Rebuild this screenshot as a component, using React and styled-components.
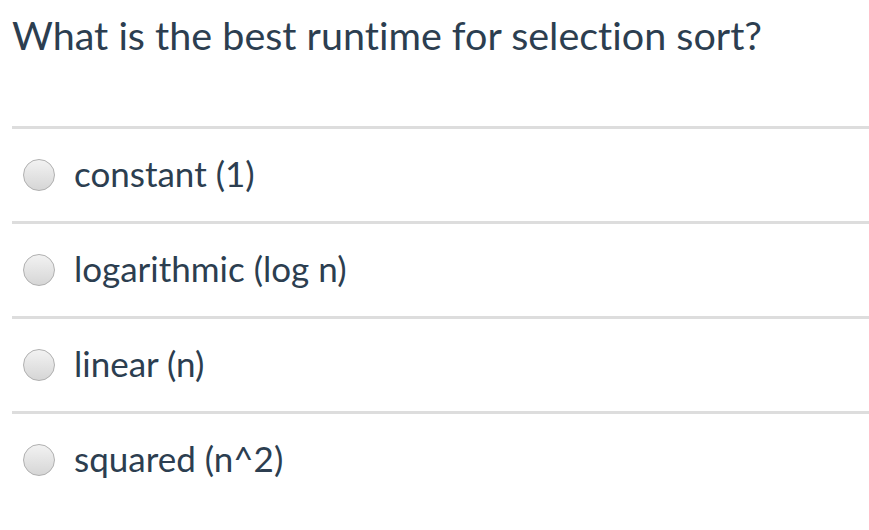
import React from 'react';
import styled, {createGlobalStyle} from 'styled-components';

const options = ['constant (1)', 'logarithmic (log n)', 'linear (n)', 'squared (n^2)'];

function App() {
    return (
        <Page>
            <GlobalStyle/>
            <Question>What is the best runtime for selection sort?</Question>
            <OptionList>
                {options.map(o => (
                    <Option key={o}>
                        <Radio type="radio" name="answer"/>
                        <Label>{o}</Label>
                    </Option>
                ))}
            </OptionList>
        </Page>
    );
}

export default App;

const GlobalStyle = createGlobalStyle`
    body {
        margin: 0;
        background: #fff;
    }
`

const Page = styled.div`
    font-family: Lato, 'Open Sans', sans-serif;
    font-variant-ligatures: none;
    color: #2c3e50;
    padding: 10px 0 0 12px;
`

const Question = styled.h1`
    font-size: 39.5px;
    font-weight: 400;
    line-height: 50px;
    margin: 0 0 66px 0;
`

const OptionList = styled.div`
    display: flex;
    flex-direction: column;
`

const Option = styled.label`
    display: flex;
    align-items: center;
    height: 92px;
    border-top: 3px solid #dddddd;
`

const Radio = styled.input`
    appearance: none;
    width: 32px;
    height: 32px;
    margin: 0 19px 0 11px;
    border-radius: 50%;
    border: 1px solid #b0b0b0;
    background: linear-gradient(#f2f2f2, #d6d6d6);
    box-sizing: border-box;
`

const Label = styled.span`
    font-size: 35px;
    line-height: 40px;
    margin-top: -4px;
`
